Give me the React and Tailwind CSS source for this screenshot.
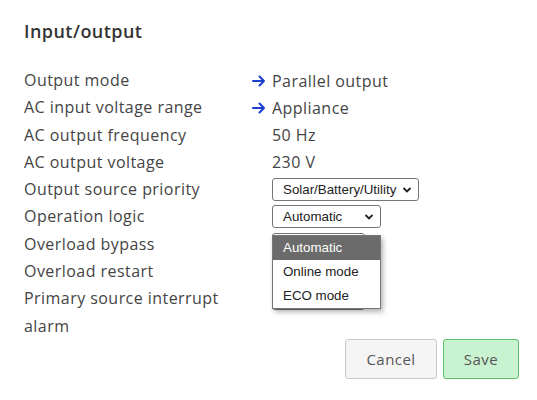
import React from "react";

const font = { fontFamily: '"Open Sans", "Noto Sans", sans-serif' };
const selectFont = { fontFamily: '"Liberation Sans", Arial, sans-serif' };

function Arrow() {
  return (
    <svg width="14" height="12" viewBox="0 0 14 12" className="shrink-0">
      <path d="M1 6h11M7.5 1.5L12 6l-4.5 4.5" fill="none" stroke="#1d3fd0" strokeWidth="2" strokeLinecap="round" strokeLinejoin="round" />
    </svg>
  );
}

function Select({ value, width }) {
  return (
    <div
      className={`h-[23px] ${width} flex items-center justify-between bg-white border border-[#767676] rounded-[3px] pl-[10px] pr-[6px] text-[13.33px] text-[#222]`}
      style={selectFont}
    >
      <span>{value}</span>
      {value && (
        <svg width="10" height="8" viewBox="0 0 10 8">
          <path d="M1.5 2l3.5 3.5L8.5 2" fill="none" stroke="#222" strokeWidth="1.8" />
        </svg>
      )}
    </div>
  );
}

function Row({ label, children }) {
  return (
    <div className="flex items-start">
      <div className="w-[228px] leading-[27.3px]">{label}</div>
      <div className="flex-1 min-h-[27px] flex items-center">{children}</div>
    </div>
  );
}

function Value({ text, arrow }) {
  return (
    <div className="flex items-center">
      <div className="w-[20px] flex items-center">{arrow && <Arrow />}</div>
      <span>{text}</span>
    </div>
  );
}

export default function App() {
  return (
    <div className="w-[537px] h-[400px] bg-white px-6 pt-[19px] text-[#444] relative tracking-[0.45px]" style={font}>
      <h2 className="text-[18px] font-semibold text-[#333] leading-[24px]">Input/output</h2>
      <div className="mt-[24px] text-[16px]">
        <Row label="Output mode"><Value arrow text="Parallel output" /></Row>
        <Row label="AC input voltage range"><Value arrow text="Appliance" /></Row>
        <Row label="AC output frequency"><Value text="50 Hz" /></Row>
        <Row label="AC output voltage"><Value text="230 V" /></Row>
        <Row label="Output source priority">
          <div className="pl-[20px] tracking-normal"><Select value="Solar/Battery/Utility" width="w-[147px]" /></div>
        </Row>
        <Row label="Operation logic">
          <div className="pl-[20px] tracking-normal"><Select value="Automatic" width="w-[109px]" /></div>
        </Row>
        <Row label="Overload bypass">
          <div className="pl-[20px]"><Select value="" width="w-[93px]" /></div>
        </Row>
        <Row label="Overload restart">
          <div className="pl-[20px]"><Select value="" width="w-[93px]" /></div>
        </Row>
        <Row label="Primary source interrupt alarm">
          <div className="pl-[20px]"><Select value="" width="w-[93px]" /></div>
        </Row>
      </div>

      <div className="absolute left-[272px] top-[235px] w-[109px] bg-white border border-[#767676] shadow-[2px_3px_5px_rgba(0,0,0,0.3)] text-[13.33px] text-[#222] tracking-normal" style={selectFont}>
        <div className="h-[24px] flex items-center px-[10px] bg-[#6b6b6b] text-white">Automatic</div>
        <div className="h-[24px] flex items-center px-[10px]">Online mode</div>
        <div className="h-[24px] flex items-center px-[10px]">ECO mode</div>
      </div>

      <div className="absolute right-[18px] top-[339px] flex gap-[6px] text-[15px]">
        <button className="w-[92px] h-[40px] rounded-[3px] border border-[#c8c8c8] bg-[#f5f5f5] text-[#555]">Cancel</button>
        <button className="w-[76px] h-[40px] rounded-[3px] border border-[#5cbf6a] bg-[#c9f2d1] text-[#555]">Save</button>
      </div>
    </div>
  );
}
